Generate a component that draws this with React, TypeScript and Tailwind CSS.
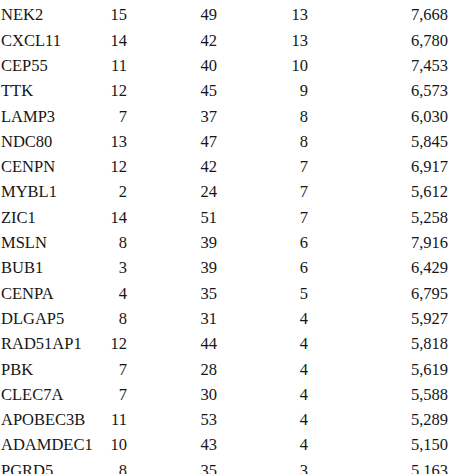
const rows: [string, string, string, string, string][] = [
  ["NEK2", "15", "49", "13", "7,668"],
  ["CXCL11", "14", "42", "13", "6,780"],
  ["CEP55", "11", "40", "10", "7,453"],
  ["TTK", "12", "45", "9", "6,573"],
  ["LAMP3", "7", "37", "8", "6,030"],
  ["NDC80", "13", "47", "8", "5,845"],
  ["CENPN", "12", "42", "7", "6,917"],
  ["MYBL1", "2", "24", "7", "5,612"],
  ["ZIC1", "14", "51", "7", "5,258"],
  ["MSLN", "8", "39", "6", "7,916"],
  ["BUB1", "3", "39", "6", "6,429"],
  ["CENPA", "4", "35", "5", "6,795"],
  ["DLGAP5", "8", "31", "4", "5,927"],
  ["RAD51AP1", "12", "44", "4", "5,818"],
  ["PBK", "7", "28", "4", "5,619"],
  ["CLEC7A", "7", "30", "4", "5,588"],
  ["APOBEC3B", "11", "53", "4", "5,289"],
  ["ADAMDEC1", "10", "43", "4", "5,150"],
  ["PGRD5", "8", "35", "3", "5,163"],
];

export default function App() {
  return (
    <div className="h-[474px] w-[474px] overflow-hidden bg-white pt-[3px] font-['Liberation_Serif',serif] text-[16.5px] text-[#161616]">
      {rows.map((r) => (
        <div key={r[0]} className="grid h-[25.3px] grid-cols-[100px_27px_90px_91px_140px] items-center leading-none">
          <span className="pl-[1px]">{r[0]}</span>
          <span className="text-right">{r[1]}</span>
          <span className="text-right">{r[2]}</span>
          <span className="text-right">{r[3]}</span>
          <span className="text-right">{r[4]}</span>
        </div>
      ))}
    </div>
  );
}
